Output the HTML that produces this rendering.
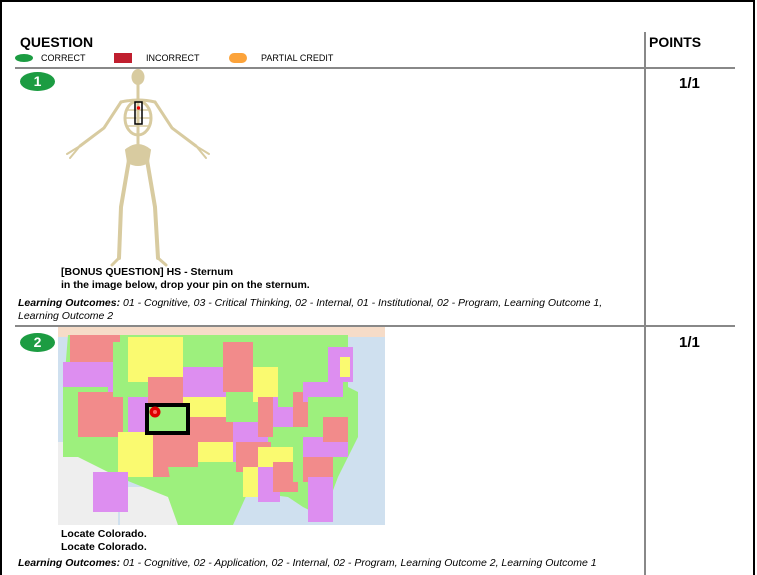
<!DOCTYPE html>
<html><head><style>
body{margin:0;width:757px;height:575px;background:#fff;font-family:"Liberation Sans",sans-serif;overflow:hidden;position:relative}
.a{position:absolute}
.b{font-weight:bold}
.badge{position:absolute;width:35px;height:19px;border-radius:50%;background:#1c9c42;color:#fff;font-weight:bold;font-size:14px;text-align:center;line-height:19px}
.lo{font-size:10.5px;font-style:italic;color:#000;line-height:13px}
</style></head><body>
<div class="a" style="left:0;top:0;width:755px;height:575px;border-left:2px solid #000;border-top:2px solid #000;border-right:2px solid #000;box-sizing:border-box"></div>
<div class="a b" style="left:20px;top:34px;font-size:14px">QUESTION</div>
<div class="a b" style="left:649px;top:34px;font-size:14px">POINTS</div>
<div class="a" style="left:15px;top:54px;width:18px;height:8px;border-radius:50%;background:#1c9c42"></div>
<div class="a" style="left:41px;top:53px;font-size:9px">CORRECT</div>
<div class="a" style="left:114px;top:53px;width:18px;height:10px;background:#c01f2f"></div>
<div class="a" style="left:146px;top:53px;font-size:9px">INCORRECT</div>
<div class="a" style="left:229px;top:53px;width:18px;height:10px;border-radius:5px;background:#fca33a"></div>
<div class="a" style="left:261px;top:53px;font-size:9px">PARTIAL CREDIT</div>
<div class="a" style="left:15px;top:67px;width:720px;height:2px;background:#888"></div>
<div class="a" style="left:644px;top:32px;width:2px;height:543px;background:#888"></div>
<div class="a" style="left:15px;top:325px;width:720px;height:2px;background:#888"></div>
<div class="badge" style="left:20px;top:72px">1</div>
<div class="badge" style="left:20px;top:333px">2</div>
<div class="a b" style="left:679px;top:75px;font-size:15px">1/1</div>
<div class="a b" style="left:679px;top:334px;font-size:15px">1/1</div>
<svg class="a" style="left:50px;top:68px" width="180" height="200" viewBox="50 68 180 200">
<g stroke="#d8cba0" stroke-linecap="round" fill="none">
<ellipse cx="138" cy="77" rx="6.5" ry="8" fill="#d8cba0" stroke="none"/>
<line x1="138" y1="85" x2="138" y2="150" stroke-width="3"/>
<path d="M121 102 Q138 98 155 102" stroke-width="3"/>
<ellipse cx="138" cy="118" rx="13" ry="17" stroke-width="3"/>
<path d="M126 110 H150 M126 118 H150 M127 126 H149" stroke-width="1.5"/>
<path d="M121 102 L104 128 L80 146" stroke-width="3"/>
<path d="M155 102 L172 128 L196 146" stroke-width="3"/>
<path d="M80 146 L67 154 M80 146 L70 158 M196 146 L209 154 M196 146 L206 158" stroke-width="2"/>
<path d="M126 150 Q138 140 150 150 L148 162 Q138 168 128 162 Z" fill="#d8cba0" stroke-width="2"/>
<path d="M129 160 L121 207 L119 258 M147 160 L155 207 L158 258" stroke-width="4"/>
<path d="M119 258 L112 265 M158 258 L166 265" stroke-width="3"/>
</g>
<rect x="135" y="102" width="7" height="22" fill="none" stroke="#000" stroke-width="1.5"/>
<circle cx="138.5" cy="108" r="1.7" fill="#e00"/>
</svg>
<div class="a b" style="left:61px;top:266px;font-size:10.5px;line-height:13px">[BONUS QUESTION] HS - Sternum<br>in the image below, drop your pin on the sternum.</div>
<div class="a lo" style="left:18px;top:297px;width:600px"><b>Learning Outcomes:</b> 01 - Cognitive, 03 - Critical Thinking, 02 - Internal, 01 - Institutional, 02 - Program, Learning Outcome 1, Learning Outcome 2</div>
<svg class="a" style="left:58px;top:327px" width="327" height="198" viewBox="0 0 327 198">
<rect width="327" height="198" fill="#cfe0ef"/>
<path d="M0 0 H327 V10 H0Z" fill="#f6dcc8"/>
<rect x="0" y="115" width="60" height="83" fill="#eee"/>
<rect x="62" y="160" width="60" height="38" fill="#eee"/>
<path d="M10 8 H290 V60 L300 65 V110 L280 150 L265 190 L245 180 L230 170 L190 165 L175 198 L120 198 L110 170 L60 150 L20 130 L5 70 Z" fill="#9df07d"/>
<rect x="12" y="8" width="50" height="30" fill="#f28b8b"/>
<rect x="5" y="35" width="55" height="30" fill="#dd8ef0"/>
<rect x="5" y="60" width="45" height="70" fill="#9df07d"/>
<rect x="20" y="65" width="45" height="45" fill="#f28b8b"/>
<rect x="55" y="15" width="30" height="55" fill="#9df07d"/>
<rect x="70" y="10" width="55" height="45" fill="#fafa70"/>
<rect x="70" y="70" width="30" height="45" fill="#dd8ef0"/>
<rect x="60" y="105" width="40" height="45" fill="#fafa70"/>
<rect x="90" y="50" width="40" height="35" fill="#f28b8b"/>
<rect x="90" y="85" width="45" height="20" fill="#9df07d"/>
<rect x="95" y="105" width="45" height="45" fill="#f28b8b"/>
<rect x="125" y="15" width="40" height="28" fill="#9df07d"/>
<rect x="125" y="40" width="45" height="30" fill="#dd8ef0"/>
<rect x="125" y="70" width="45" height="25" fill="#fafa70"/>
<rect x="130" y="90" width="50" height="25" fill="#f28b8b"/>
<rect x="140" y="115" width="40" height="20" fill="#fafa70"/>
<path d="M110 140 H180 V180 L170 198 H120 Z" fill="#9df07d"/>
<rect x="165" y="15" width="30" height="50" fill="#f28b8b"/>
<rect x="168" y="65" width="32" height="30" fill="#9df07d"/>
<rect x="175" y="95" width="35" height="40" fill="#dd8ef0"/>
<rect x="178" y="115" width="35" height="30" fill="#f28b8b"/>
<rect x="185" y="140" width="25" height="30" fill="#fafa70"/>
<rect x="195" y="40" width="25" height="35" fill="#fafa70"/>
<rect x="200" y="70" width="22" height="40" fill="#f28b8b"/>
<rect x="215" y="70" width="20" height="35" fill="#dd8ef0"/>
<rect x="220" y="50" width="25" height="30" fill="#9df07d"/>
<rect x="215" y="100" width="40" height="20" fill="#9df07d"/>
<rect x="200" y="120" width="40" height="25" fill="#fafa70"/>
<rect x="200" y="140" width="22" height="35" fill="#dd8ef0"/>
<rect x="215" y="135" width="25" height="30" fill="#f28b8b"/>
<rect x="235" y="120" width="30" height="35" fill="#9df07d"/>
<rect x="235" y="65" width="20" height="35" fill="#f28b8b"/>
<rect x="245" y="110" width="45" height="20" fill="#dd8ef0"/>
<rect x="245" y="55" width="40" height="20" fill="#dd8ef0"/>
<rect x="250" y="70" width="35" height="40" fill="#9df07d"/>
<rect x="265" y="90" width="25" height="25" fill="#f28b8b"/>
<rect x="245" y="130" width="30" height="25" fill="#f28b8b"/>
<rect x="250" y="150" width="25" height="45" fill="#dd8ef0"/>
<rect x="270" y="20" width="25" height="35" fill="#dd8ef0"/>
<rect x="282" y="30" width="10" height="20" fill="#fafa70"/>
<rect x="35" y="145" width="35" height="40" fill="#dd8ef0"/>
<rect x="87" y="76" width="45" height="32" fill="#000"/>
<rect x="91" y="80" width="37" height="24" fill="#9df07d"/>
<circle cx="97" cy="85" r="5.5" fill="#d00"/>
<circle cx="97" cy="85" r="2" fill="#f66"/>
</svg>
<div class="a b" style="left:61px;top:528px;font-size:10.5px;line-height:13px">Locate Colorado.<br>Locate Colorado.</div>
<div class="a lo" style="left:18px;top:557px;width:620px"><b>Learning Outcomes:</b> 01 - Cognitive, 02 - Application, 02 - Internal, 02 - Program, Learning Outcome 2, Learning Outcome 1</div>
</body></html>
